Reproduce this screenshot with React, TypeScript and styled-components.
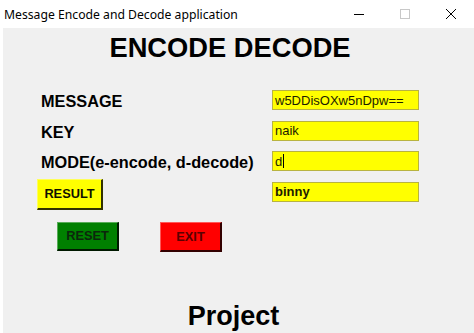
import React from "react";
import styled, { createGlobalStyle } from "styled-components";

const Global = createGlobalStyle`
  html, body { margin: 0; padding: 0; background: #ffffff; }
  body { font-family: "Liberation Sans", Arial, sans-serif; }
`;

const Window = styled.div`
  width: 474px;
  height: 333px;
  display: flex;
  flex-direction: column;
  background: #ffffff;
  overflow: hidden;
`;

const TitleBar = styled.div`
  height: 28px;
  flex: none;
  display: flex;
  align-items: center;
  background: #ffffff;
`;

const TitleText = styled.div`
  flex: 1;
  padding-left: 4px;
  font-family: "Segoe UI", "Noto Sans", "Open Sans", sans-serif;
  font-size: 12.2px;
  color: #000000;
  white-space: nowrap;
`;

const Controls = styled.div`
  display: flex;
  align-items: center;
  height: 100%;
`;

const ControlButton = styled.div<{ $w: number }>`
  width: ${(p) => p.$w}px;
  height: 100%;
  display: flex;
  align-items: center;
  justify-content: center;
`;

const Client = styled.div`
  flex: 1;
  margin-left: 3px;
  background: #f0f0f0;
  display: flex;
  flex-direction: column;
`;

const Heading = styled.div`
  margin-top: 6px;
  padding-right: 17px;
  text-align: center;
  font-size: 27.3px;
  line-height: 27px;
  font-weight: 700;
  color: #000000;
`;

const Form = styled.div`
  margin-top: 29px;
  margin-left: 34px;
  display: grid;
  grid-template-columns: 235px 147px;
  grid-auto-rows: 20px;
  row-gap: 10.67px;
  align-items: center;
`;

const Label = styled.div`
  padding-left: 4px;
  padding-top: 2px;
  font-size: 16.3px;
  line-height: 20px;
  font-weight: 700;
  color: #000000;
  white-space: nowrap;
`;

const Field = styled.div<{ $bold?: boolean }>`
  box-sizing: border-box;
  height: 20px;
  display: flex;
  align-items: center;
  padding-left: 2px;
  background: #ffff00;
  border: 1px solid #b8b340;
  font-size: 13px;
  font-weight: ${(p) => (p.$bold ? 700 : 400)};
  color: #1c1c00;
  white-space: nowrap;
  overflow: hidden;
`;

const Caret = styled.span`
  display: inline-block;
  width: 1px;
  height: 14px;
  background: #000000;
  margin-left: 1px;
`;

const Button = styled.div<{ $bg: string; $fg: string; $w: number; $h: number }>`
  box-sizing: border-box;
  width: ${(p) => p.$w}px;
  height: ${(p) => p.$h}px;
  display: flex;
  align-items: center;
  justify-content: center;
  background: ${(p) => p.$bg};
  color: ${(p) => p.$fg};
  font-size: 12.8px;
  font-weight: 700;
  border-top: 1px solid rgba(255, 255, 255, 0.35);
  border-left: 1px solid rgba(255, 255, 255, 0.35);
  border-right: 2px solid rgba(0, 0, 0, 0.8);
  border-bottom: 2px solid rgba(0, 0, 0, 0.8);
`;

const ResultCell = styled.div`
  align-self: center;
  margin-top: 5px;
`;

const ButtonRow = styled.div`
  margin-top: 20px;
  margin-left: 54px;
  display: flex;
  gap: 41px;
`;

const Footer = styled.div`
  margin-top: 51px;
  padding-right: 10px;
  text-align: center;
  font-size: 27px;
  line-height: 27px;
  font-weight: 700;
  color: #000000;
`;

export default function App() {
  return (
    <>
      <Global />
      <Window>
        <TitleBar>
          <TitleText>Message Encode and Decode application</TitleText>
          <Controls>
            <ControlButton $w={46}>
              <svg width="10" height="10" viewBox="0 0 10 10">
                <line x1="0" y1="5.5" x2="10" y2="5.5" stroke="#000" strokeWidth="1" />
              </svg>
            </ControlButton>
            <ControlButton $w={46}>
              <svg width="10" height="10" viewBox="0 0 10 10">
                <rect x="0.5" y="0.5" width="9" height="9" fill="none" stroke="#c8c8c8" strokeWidth="1" />
              </svg>
            </ControlButton>
            <ControlButton $w={46}>
              <svg width="10" height="10" viewBox="0 0 10 10">
                <path d="M0 0 L10 10 M10 0 L0 10" stroke="#000" strokeWidth="1" />
              </svg>
            </ControlButton>
          </Controls>
        </TitleBar>
        <Client>
          <Heading>ENCODE DECODE</Heading>
          <Form>
            <Label>MESSAGE</Label>
            <Field>w5DDisOXw5nDpw==</Field>
            <Label>KEY</Label>
            <Field>naik</Field>
            <Label>MODE(e-encode, d-decode)</Label>
            <Field>
              d<Caret />
            </Field>
            <ResultCell>
              <Button $bg="#ffff00" $fg="#101000" $w={66} $h={31}>
                RESULT
              </Button>
            </ResultCell>
            <Field $bold>binny</Field>
          </Form>
          <ButtonRow>
            <Button $bg="#008000" $fg="#0c260c" $w={62} $h={29}>
              RESET
            </Button>
            <Button $bg="#ff0000" $fg="#5a0000" $w={62} $h={30}>
              EXIT
            </Button>
          </ButtonRow>
          <Footer>Project</Footer>
        </Client>
      </Window>
    </>
  );
}
